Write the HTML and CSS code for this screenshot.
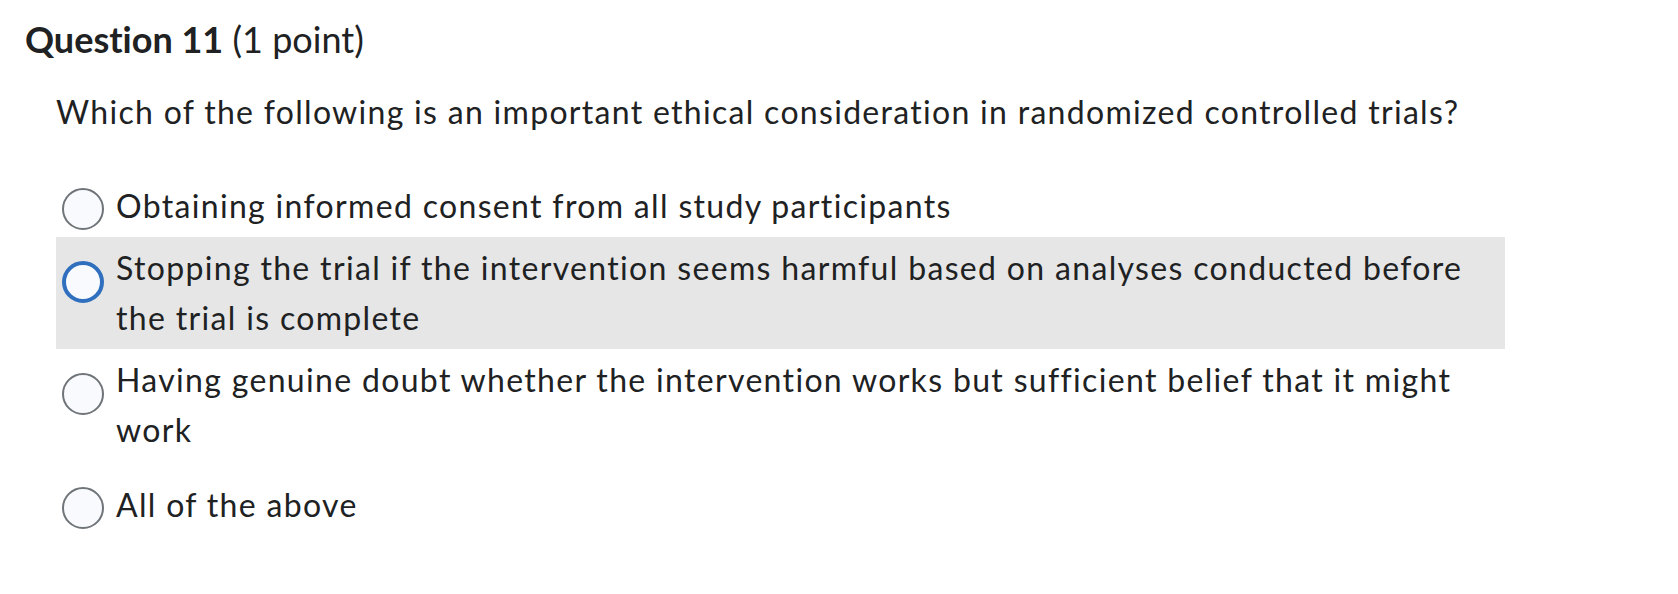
FILE: index.html
```html
<!DOCTYPE html>
<html lang="en">
<head>
<meta charset="utf-8">
<title>Question 11</title>
<link rel="stylesheet" href="styles.css">
</head>
<body>
<div class="quiz">
  <h2 class="q-title"><strong>Question 11</strong> (1 point)</h2>
  <div class="q-body">
    <p class="q-text">Which of the following is an important ethical consideration in randomized controlled trials?</p>
    <div class="options">
      <label class="option">
        <span class="radio"></span>
        <span class="opt-text">Obtaining informed consent from all study participants</span>
      </label>
      <label class="option option-hover option-multi">
        <span class="radio radio-focus"></span>
        <span class="opt-text">Stopping the trial if the intervention seems harmful based on analyses conducted before the trial is complete</span>
      </label>
      <label class="option option-multi option-spaced">
        <span class="radio"></span>
        <span class="opt-text">Having genuine doubt whether the intervention works but sufficient belief that it might work</span>
      </label>
      <label class="option">
        <span class="radio"></span>
        <span class="opt-text">All of the above</span>
      </label>
    </div>
  </div>
</div>
</body>
</html>
```

FILE: styles.css
```css
html, body {
  margin: 0;
  padding: 0;
  background: #ffffff;
}

body {
  font-family: Lato, "Noto Sans", sans-serif;
  color: #202122;
  font-variant-ligatures: none;
}

.quiz {
  padding: 19px 0 0 25px;
}

.q-title {
  margin: 0;
  font-size: 36px;
  line-height: 40px;
  font-weight: 400;
}

.q-title strong {
  font-weight: 700;
}

.q-body {
  padding-left: 31px;
  width: 1449px;
}

.q-text {
  margin: 33px 0 0 0;
  font-size: 32px;
  line-height: 40px;
  letter-spacing: 1.3px;
}

.options {
  margin-top: 43px;
  display: flex;
  flex-direction: column;
}

.option {
  display: flex;
  align-items: flex-start;
  padding: 6px 6px 6px 6px;
  font-size: 32px;
  line-height: 50px;
  letter-spacing: 1.33px;
}

.option-hover {
  background: #e6e6e6;
}

.option-spaced {
  margin-bottom: 13px;
}

.radio {
  flex: none;
  box-sizing: border-box;
  width: 42px;
  height: 42px;
  margin-top: 7px;
  margin-right: 12px;
  border-radius: 50%;
  border: 2px solid #6f7479;
  background: #f9fafe;
}

.option-multi .radio {
  margin-top: 18px;
}

.radio-focus {
  border: 4px solid #2f6fbe;
}

.opt-text {
  flex: 1;
}
```
